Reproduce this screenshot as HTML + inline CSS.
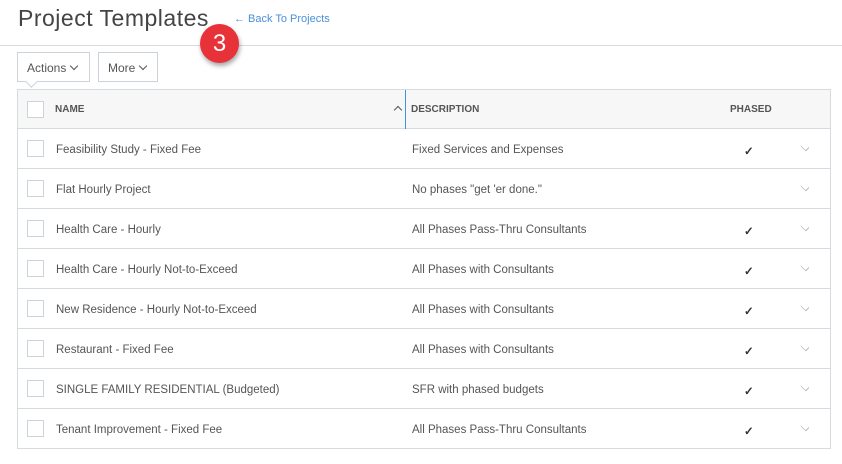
<!DOCTYPE html>
<html><head><style>
*{margin:0;padding:0;box-sizing:border-box}
body{width:842px;height:464px;background:#fff;font-family:"Liberation Sans",sans-serif;position:relative;overflow:hidden;color:#555}
.abs{position:absolute}
h1{position:absolute;left:18px;top:5px;font-weight:normal;font-size:23px;color:#444;letter-spacing:.5px}
.back{left:234px;top:13px;font-size:11px;color:#4a90d9}
.hr{left:0;top:45px;width:842px;height:1px;background:#d6dbe0}
.btn{top:52px;height:30px;border:1px solid #ccd3da;background:#fff;font-size:12px;color:#555;padding:8px 0 0 9px}
.bc{display:inline-block;width:6px;height:6px;border-right:1px solid #555;border-bottom:1px solid #555;transform:rotate(45deg);margin-left:5px;position:relative;top:-3px}
.tbl{left:17px;top:89px;width:814px;height:360px;border:1px solid #d6dbe0}
.hdr{left:0;top:0;width:812px;height:39px;background:#f7f7f8;border-bottom:1px solid #d6dbe0}
.row{left:0;width:812px;height:40px;border-bottom:1px solid #d6dbe0;font-size:11.5px;color:#555}
.row span{top:15px}
.cb{position:absolute;left:9px;width:17px;height:17px;border:1px solid #ccd3da;background:#fff}
.th{position:absolute;top:14px;font-size:10px;font-weight:bold;color:#555}
.ck{font-weight:bold;color:#333}
.chev{position:absolute;left:783px;top:14px;width:8px;height:8px;border-right:1px solid #aab;border-bottom:1px solid #aab;transform:rotate(45deg) scale(.9,.6)}
</style></head><body>
<h1>Project Templates</h1>
<div class="abs back">&#8592; Back To Projects</div>
<div class="abs hr"></div>
<div class="abs btn" style="left:17px;width:73px">Actions<span class="bc"></span></div>
<div class="abs btn" style="left:98px;width:60px">More<span class="bc"></span></div>
<div class="abs" style="left:27px;top:77px;width:9px;height:9px;background:#fff;border-right:1px solid #ccd3da;border-bottom:1px solid #ccd3da;transform:rotate(45deg)"></div>
<div class="abs tbl">
 <div class="abs hdr">
  <div class="cb" style="top:11px"></div>
  <div class="th" style="left:37px">NAME</div>
  <div class="abs" style="left:377px;top:17px;width:6px;height:6px;border-left:1px solid #555;border-top:1px solid #555;transform:rotate(45deg)"></div>
  <div class="abs" style="left:387px;top:0;width:1px;height:39px;background:#4a90d9"></div>
  <div class="th" style="left:393px">DESCRIPTION</div>
  <div class="th" style="left:712px">PHASED</div>
 </div>
 <div class="abs row" style="top:39px"><div class="cb" style="top:11px"></div><span class="abs" style="left:38px">Feasibility Study - Fixed Fee</span><span class="abs" style="left:394px">Fixed Services and Expenses</span><span class="abs ck" style="left:726px">&#10003;</span><div class="chev"></div></div>
 <div class="abs row" style="top:79px"><div class="cb" style="top:11px"></div><span class="abs" style="left:38px">Flat Hourly Project</span><span class="abs" style="left:394px">No phases "get 'er done."</span><div class="chev"></div></div>
 <div class="abs row" style="top:119px"><div class="cb" style="top:11px"></div><span class="abs" style="left:38px">Health Care - Hourly</span><span class="abs" style="left:394px">All Phases Pass-Thru Consultants</span><span class="abs ck" style="left:726px">&#10003;</span><div class="chev"></div></div>
 <div class="abs row" style="top:159px"><div class="cb" style="top:11px"></div><span class="abs" style="left:38px">Health Care - Hourly Not-to-Exceed</span><span class="abs" style="left:394px">All Phases with Consultants</span><span class="abs ck" style="left:726px">&#10003;</span><div class="chev"></div></div>
 <div class="abs row" style="top:199px"><div class="cb" style="top:11px"></div><span class="abs" style="left:38px">New Residence - Hourly Not-to-Exceed</span><span class="abs" style="left:394px">All Phases with Consultants</span><span class="abs ck" style="left:726px">&#10003;</span><div class="chev"></div></div>
 <div class="abs row" style="top:239px"><div class="cb" style="top:11px"></div><span class="abs" style="left:38px">Restaurant - Fixed Fee</span><span class="abs" style="left:394px">All Phases with Consultants</span><span class="abs ck" style="left:726px">&#10003;</span><div class="chev"></div></div>
 <div class="abs row" style="top:279px"><div class="cb" style="top:11px"></div><span class="abs" style="left:38px">SINGLE FAMILY RESIDENTIAL (Budgeted)</span><span class="abs" style="left:394px">SFR with phased budgets</span><span class="abs ck" style="left:726px">&#10003;</span><div class="chev"></div></div>
 <div class="abs row" style="top:319px;border-bottom:none"><div class="cb" style="top:11px"></div><span class="abs" style="left:38px">Tenant Improvement - Fixed Fee</span><span class="abs" style="left:394px">All Phases Pass-Thru Consultants</span><span class="abs ck" style="left:726px">&#10003;</span><div class="chev"></div></div>
</div>
<div class="abs" style="left:200px;top:24px;width:39px;height:39px;border-radius:50%;background:#e8323a;box-shadow:1px 3px 5px rgba(0,0,0,.35);color:#fff;font-size:24px;text-align:center;line-height:39px">3</div>
</body></html>
